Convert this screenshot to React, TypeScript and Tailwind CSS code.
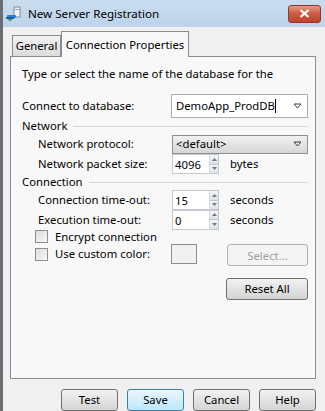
import { ReactNode } from "react";

const font = { fontFamily: '"Noto Sans", "Open Sans", sans-serif' };

function Arrow() {
  return (
    <svg width="9" height="6" viewBox="0 0 9 6" className="shrink-0">
      <path d="M1 1 L8 1 L4.5 5 Z" fill="none" stroke="#404040" strokeWidth="1" />
    </svg>
  );
}

function Spin({ value }: { value: string }) {
  return (
    <div className="flex h-[20px] w-[47px] border border-[#c5c9cf] bg-white">
      <div className="flex-1 pl-[2px] text-[11.3px] leading-[20px] text-black">{value}</div>
      <div className="flex w-[9px] flex-col border-l border-[#d6dbe1]">
        <div className="flex flex-1 items-center justify-center border-b border-[#c2c8d0] bg-gradient-to-b from-[#f4f6f8] to-[#dce2e8]">
          <svg width="5" height="3" viewBox="0 0 5 3">
            <path d="M0 3 L2.5 0 L5 3 Z" fill="#6f7a86" />
          </svg>
        </div>
        <div className="flex flex-1 items-center justify-center bg-gradient-to-b from-[#f4f6f8] to-[#dce2e8]">
          <svg width="5" height="3" viewBox="0 0 5 3">
            <path d="M0 0 L2.5 3 L5 0 Z" fill="#6f7a86" />
          </svg>
        </div>
      </div>
    </div>
  );
}

function GroupHead({ label }: { label: string }) {
  return (
    <div className="flex h-[16px] items-center">
      <span className="text-[11.3px] leading-none text-black">{label}</span>
      <div className="ml-[6px] h-px flex-1 bg-[#d5dadf]" />
    </div>
  );
}

function Row({ label, children, h = "h-[20px]" }: { label: string; children: ReactNode; h?: string }) {
  return (
    <div className={`flex ${h} items-center pl-[16px]`}>
      <span className="w-[134px] text-[11.3px] leading-none text-black">{label}</span>
      {children}
    </div>
  );
}

function Check({ label }: { label: string }) {
  return (
    <div className="flex items-center pl-[13px]">
      <div className="h-[13px] w-[13px] border border-[#8f8f8f] bg-gradient-to-br from-[#dcdcdc] to-[#f8f8f8]" />
      <span className="ml-[7px] text-[11.3px] leading-none text-black">{label}</span>
    </div>
  );
}

function Button({ label, focus, disabled, w = "w-[57px]" }: { label: string; focus?: boolean; disabled?: boolean; w?: string }) {
  return (
    <button
      className={`h-[22px] ${w} rounded-[3px] border text-[11.3px] leading-none ${
        focus ? "border-[#3c7fb1] bg-gradient-to-b from-[#eaf6fd] to-[#bee6fd]" : disabled ? "border-[#adb2b5] bg-[#f4f4f4]" : "border-[#707070] bg-gradient-to-b from-[#f2f2f2] to-[#d4d4d4]"
      } ${disabled ? "text-[#a0a0a0]" : "text-black"}`}
    >
      {label}
    </button>
  );
}

export default function App() {
  return (
    <div className="flex h-[411px] w-[325px] flex-col overflow-hidden border-l-[3px] border-[#6a6e73] bg-[#f0f0f0]" style={font}>
      {/* title bar */}
      <div className="flex h-[27px] shrink-0 items-center bg-gradient-to-b from-[#cadcef] to-[#bdd3ea] pl-[3px] pr-[4px]">
        <svg width="17" height="16" viewBox="0 0 17 16">
          <rect x="8" y="1" width="6" height="10" fill="#f4f6f8" stroke="#7d8790" />
          <rect x="9" y="3" width="4" height="1" fill="#9aa4ae" />
          <rect x="1" y="9" width="9" height="3" rx="1" fill="#2c7fd4" />
          <circle cx="4" cy="13" r="2" fill="#3aa346" />
          <rect x="0" y="11" width="8" height="2" fill="#1d5fb0" />
        </svg>
        <span className="ml-[5px] text-[11.6px] leading-none text-black">New Server Registration</span>
        <div className="flex-1" />
        <div className="flex h-[18px] w-[33px] items-center justify-center rounded-[3px] border border-[#8d3a2c] bg-gradient-to-b from-[#e39a86] via-[#cc5840] to-[#c0432d]">
          <svg width="11" height="9" viewBox="0 0 11 9">
            <path d="M1.5 1 L9.5 8 M9.5 1 L1.5 8" stroke="white" strokeWidth="2.2" />
          </svg>
        </div>
      </div>

      {/* body */}
      <div className="flex flex-1 flex-col pl-[7px] pr-[9px] pt-[4px]">
        {/* tabs */}
        <div className="flex h-[25px] items-end pl-[2px]">
          <div className="flex h-[21px] w-[49px] items-center justify-center border border-b-0 border-[#898c95] bg-gradient-to-b from-[#f2f2f2] to-[#dcdcdc] text-[11.3px] leading-none text-black">
            General
          </div>
          <div className="relative z-10 -mb-px flex h-[26px] w-[128px] items-center justify-center border border-b-0 border-[#898c95] bg-[#f8f8f8] text-[11.3px] leading-none text-black">
            Connection Properties
          </div>
        </div>

        {/* panel */}
        <div className="flex h-[323px] flex-col border border-[#898c95] bg-[#f8f8f8] pl-[11px] pr-[7px] pt-[8px]">
          <div className="flex h-[18px] items-center text-[11.3px] leading-none text-black">
            Type or select the name of the database for the
          </div>
          <div className="mt-[11px] flex h-[24px] items-center">
            <span className="w-[149px] text-[11.3px] leading-none text-black">Connect to database:</span>
            <div className="flex h-[24px] flex-1 items-center border border-[#abadb3] bg-white pl-[4px] pr-[5px]">
              <span className="text-[11.3px] leading-none text-black">DemoApp_ProdDB</span>
              <div className="h-[14px] w-px bg-black" />
              <div className="flex-1" />
              <Arrow />
            </div>
          </div>
          <GroupHead label="Network" />
          <Row label="Network protocol:">
            <div className="flex h-[19px] flex-1 items-center border border-[#8e8f8f] bg-gradient-to-b from-[#f2f2f2] to-[#d6d6d6] pl-[3px] pr-[5px]">
              <span className="text-[11.3px] leading-none text-black">&lt;default&gt;</span>
              <div className="flex-1" />
              <Arrow />
            </div>
          </Row>
          <Row label="Network packet size:">
            <Spin value="4096" />
            <span className="ml-[11px] text-[11.3px] leading-none text-black">bytes</span>
          </Row>
          <GroupHead label="Connection" />
          <Row label="Connection time-out:">
            <Spin value="15" />
            <span className="ml-[11px] text-[11.3px] leading-none text-black">seconds</span>
          </Row>
          <Row label="Execution time-out:" h="h-[19px]">
            <Spin value="0" />
            <span className="ml-[11px] text-[11.3px] leading-none text-black">seconds</span>
          </Row>
          <div className="flex h-[15px] items-center">
            <Check label="Encrypt connection" />
          </div>
          <div className="flex h-[20px] items-center">
            <div className="w-[150px]">
              <Check label="Use custom color:" />
            </div>
            <div className="h-[20px] w-[26px] border border-[#8f8f8f] bg-[#f0f0f0]" />
            <div className="ml-[30px]">
              <Button label="Select..." disabled w="w-[81px]" />
            </div>
          </div>
          <div className="mt-[14px] flex justify-end">
            <Button label="Reset All" w="w-[82px]" />
          </div>
        </div>

        {/* bottom buttons */}
        <div className="mt-[10px] flex justify-end gap-[9px]">
          <Button label="Test" />
          <Button label="Save" focus />
          <Button label="Cancel" />
          <Button label="Help" />
        </div>
      </div>
    </div>
  );
}
